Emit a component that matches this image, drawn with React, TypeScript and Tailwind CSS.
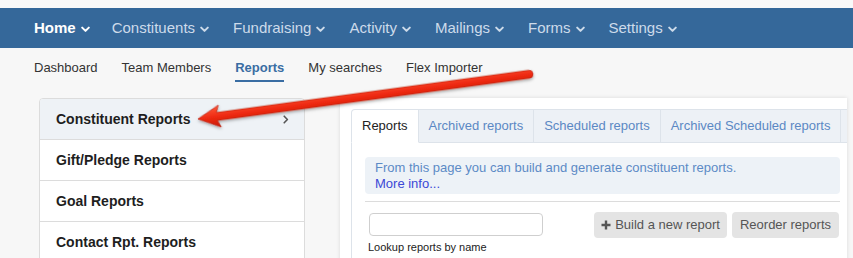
import React from 'react'

const mainNav = ['Home', 'Constituents', 'Fundraising', 'Activity', 'Mailings', 'Forms', 'Settings']
const subNav = ['Dashboard', 'Team Members', 'Reports', 'My searches', 'Flex Importer']
const sideItems = ['Constituent Reports', 'Gift/Pledge Reports', 'Goal Reports', 'Contact Rpt. Reports']
const tabs = ['Reports', 'Archived reports', 'Scheduled reports', 'Archived Scheduled reports', '']

function Caret({ className }: { className: string }) {
  return (
    <svg width="9" height="7" viewBox="0 0 9 7" className={className}>
      <path d="M1.2 1.6 L4.5 4.9 L7.8 1.6" fill="none" stroke="currentColor" strokeWidth="2" strokeLinecap="round" strokeLinejoin="round" />
    </svg>
  )
}

function Arrow() {
  // red annotation arrow pointing at the first sidebar item
  return (
    <svg width="853" height="258" className="absolute left-0 top-0 pointer-events-none">
      <defs>
        <linearGradient id="shaft" x1="0" y1="0" x2="0" y2="1">
          <stop offset="0" stopColor="#ff5a3c" />
          <stop offset="0.5" stopColor="#ee2a12" />
          <stop offset="1" stopColor="#c81a08" />
        </linearGradient>
        <filter id="shadow" x="-10%" y="-50%" width="120%" height="200%">
          <feDropShadow dx="0" dy="1.5" stdDeviation="1.5" floodColor="#000" floodOpacity="0.35" />
        </filter>
      </defs>
      <g transform="translate(198 119) rotate(-7.7)" filter="url(#shadow)">
        <path
          d="M0 0 L22 -11 L19 -4 L334 -4 A4 4 0 0 1 334 4 L19 4 L22 11 Z"
          fill="url(#shaft)"
          stroke="#b81606"
          strokeWidth="0.6"
          strokeLinejoin="round"
        />
      </g>
    </svg>
  )
}

export default function App() {
  return (
    <div className="relative w-[853px] h-[258px] overflow-hidden bg-[#f7f7f7] font-['Liberation_Sans',Arial,sans-serif]">
      {/* Top navigation */}
      <div className="h-2 bg-[#f9f9f9]" />
      <nav className="h-10 bg-[#35689a] flex items-center pl-[34px] text-[15px]">
        {mainNav.map((item, i) => (
          <div
            key={item}
            className={
              i === 0
                ? 'flex items-center gap-[5px] mr-[22px] text-white font-bold'
                : 'flex items-center gap-[5px] mr-[24px] text-[#cddbea]'
            }
          >
            <span>{item}</span>
            <Caret className="mt-[2px]" />
          </div>
        ))}
      </nav>

      {/* Sub navigation */}
      <div className="h-10 flex items-center pl-[34px] text-[13px] text-[#333]">
        {subNav.map((item) => (
          <div
            key={item}
            className={
              item === 'Reports'
                ? 'relative mr-[24px] font-bold text-[#3a6da3]'
                : 'mr-[24px]'
            }
          >
            {item}
            {item === 'Reports' && <div className="absolute left-0 right-0 top-[22px] h-[2px] bg-[#3a6da3]" />}
          </div>
        ))}
      </div>

      {/* Main area */}
      <div className="flex pt-[10px]">
        {/* Sidebar */}
        <div className="ml-[39px] w-[266px] bg-white border border-[#dcdcdc] rounded-t-[4px] overflow-hidden shrink-0">
          {sideItems.map((item, i) => (
            <div
              key={item}
              className={
                i === 0
                  ? 'h-[41px] flex items-center justify-between pl-4 pr-[15px] bg-[#eef2f6] border-b border-[#dcdcdc]'
                  : 'h-[41px] flex items-center pl-4 border-b border-[#dcdcdc]'
              }
            >
              <span className="text-[14px] font-bold text-[#1e1e1e]">{item}</span>
              {i === 0 && (
                <svg width="6" height="9" viewBox="0 0 6 9">
                  <path d="M1.2 1.2 L4.4 4.5 L1.2 7.8" fill="none" stroke="#555" strokeWidth="1.6" strokeLinecap="round" strokeLinejoin="round" />
                </svg>
              )}
            </div>
          ))}
        </div>

        {/* Reports panel */}
        <div className="ml-[35px] mr-[6px] flex-1 bg-white rounded-tl-[4px] shadow-[0_0_4px_rgba(0,0,0,0.12)] overflow-hidden pl-[11px] pt-[11px]">
          <div className="flex text-[13px] border-b border-[#dde3ea] h-[34px]">
            {tabs.map((tab, i) => (
              <div
                key={i}
                className={
                  i === 0
                    ? 'shrink-0 flex items-center px-[10px] bg-white text-[#222] border border-[#dde3ea] border-b-white rounded-tl-[4px] -mb-px h-[34px]'
                    : 'shrink-0 flex items-center px-[10px] min-w-[40px] bg-[#edf1f6] text-[#5b88c4] border-t border-r border-[#dde3ea] h-[33px]'
                }
              >
                {tab}
              </div>
            ))}
          </div>
          <div className="border-l border-[#dde3ea] pl-[13px] pt-[14px] h-[200px]">
            <div className="w-[475px] rounded-[4px] bg-[#edf2f7] px-[10px] pt-[3px] pb-[2px] text-[13px] leading-4">
              <div className="text-[#5c8ac6]">From this page you can build and generate constituent reports.</div>
              <div className="text-[#3b48d6]">More info...</div>
            </div>
            <div className="w-[475px] border-t border-[#dcdcdc] mt-[7px]" />
            <div className="w-[475px] flex justify-between pt-[9px]">
              <div className="pl-[4px] pt-[2px]">
                <div className="w-[174px] h-[23px] rounded-[4px] border border-[#cfcfcf] bg-white" />
                <div className="text-[11px] text-[#222] mt-[3px] -ml-px">Lookup reports by name</div>
              </div>
              <div className="flex gap-[5px] h-[26px] pr-px mt-px">
                <div className="flex items-center gap-[4px] px-[7px] rounded-[4px] bg-[#e4e4e4] text-[13px] text-[#555]">
                  <svg width="10" height="10" viewBox="0 0 10 10">
                    <path d="M5 0.5 V9.5 M0.5 5 H9.5" stroke="#555" strokeWidth="2.4" />
                  </svg>
                  <span>Build a new report</span>
                </div>
                <div className="flex items-center px-[8px] rounded-[4px] bg-[#e4e4e4] text-[13px] text-[#555]">Reorder reports</div>
              </div>
            </div>
          </div>
        </div>
      </div>

      <Arrow />
    </div>
  )
}
